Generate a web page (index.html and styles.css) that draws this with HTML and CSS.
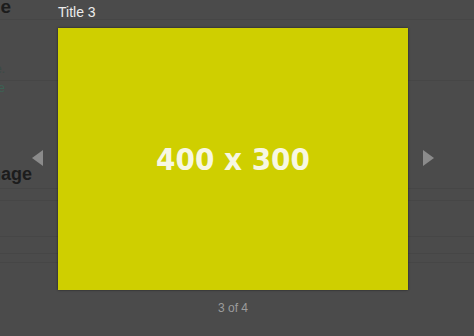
FILE: index.html
```html
<!DOCTYPE html>
<html>
<head>
<meta charset="utf-8">
<link rel="stylesheet" href="styles.css">
</head>
<body>
<div class="page">
  <div class="sec sec-top">
    <div class="clip clip-h1"><span class="h1">Lightbox Example</span></div>
  </div>
  <div class="sec sec-links">
    <div class="clip clip-link"><span class="link link-dim">Home.</span></div>
  </div>
  <div class="sec sec-h2">
    <div class="clip clip-link"><span class="link">Single image</span></div>
    <div class="clip clip-h2"><span class="h2">Single Image</span></div>
  </div>
  <div class="sec sec-a"></div>
  <div class="sec sec-b"></div>
  <div class="sec sec-c"></div>
  <div class="sec sec-d"></div>
</div>

<div class="lightbox">
  <div class="lb-title">Title 3</div>
  <div class="lb-image"><span class="lb-size">400 x 300</span></div>
  <div class="lb-counter">3 of 4</div>
  <div class="lb-prev"></div>
  <div class="lb-next"></div>
</div>
</body>
</html>
```

FILE: styles.css
```css
html, body {
  margin: 0;
  padding: 0;
}
body {
  width: 474px;
  height: 336px;
  overflow: hidden;
  position: relative;
  background: #4b4b4b;
  font-family: "Liberation Sans", Arial, sans-serif;
}
.page {
  display: flex;
  flex-direction: column;
}
.sec {
  border-bottom: 1px solid #464646;
  box-sizing: border-box;
}
.sec-top { height: 20px; }
.sec-links {
  height: 61px;
  padding-top: 43px;
}
.sec-h2 {
  height: 108px;
  display: flex;
  flex-direction: column;
  justify-content: space-between;
  padding-top: 1px;
  padding-bottom: 4px;
}
.sec-a { height: 12px; }
.sec-b { height: 36px; }
.sec-c { height: 17px; }
.sec-d { height: 9px; }

.clip {
  display: flex;
  justify-content: flex-end;
  overflow: hidden;
  white-space: nowrap;
}
.clip-h1 { width: 11px; }
.clip-h2 { width: 32px; }
.clip-link { width: 5px; }
.h1 {
  font-weight: bold;
  font-size: 19px;
  line-height: 14px;
  color: #1c1c1c;
}
.h2 {
  font-weight: bold;
  font-size: 18px;
  line-height: 20px;
  color: #1c1c1c;
}
.link {
  font-size: 12px;
  line-height: 12px;
  color: #3d6154;
}
.link-dim { color: #3a4a44; }

.lightbox {
  position: absolute;
  left: 58px;
  top: 0;
  width: 350px;
  display: flex;
  flex-direction: column;
}
.lb-title {
  height: 28px;
  box-sizing: border-box;
  padding-top: 5px;
  font-size: 14px;
  line-height: 14px;
  color: #ececec;
}
.lb-image {
  width: 350px;
  height: 262px;
  background: #cfcf00;
  box-shadow: 0 0 2px rgba(0, 0, 0, 0.6);
  display: flex;
  align-items: center;
  justify-content: center;
}
.lb-size {
  font-family: "DejaVu Sans Condensed", "DejaVu Sans", sans-serif;
  font-stretch: condensed;
  font-weight: bold;
  font-size: 31px;
  line-height: 31px;
  color: #f7f7e2;
  padding-top: 1px;
}
.lb-counter {
  margin-top: 12px;
  text-align: center;
  font-size: 12px;
  line-height: 12px;
  color: #9c9c9c;
}
.lb-prev, .lb-next {
  position: absolute;
  top: 150px;
  width: 0;
  height: 0;
  border-top: 8px solid transparent;
  border-bottom: 8px solid transparent;
}
.lb-prev {
  left: -26px;
  border-right: 11px solid #8b8b8b;
}
.lb-next {
  left: 365px;
  border-left: 11px solid #8b8b8b;
}
```
